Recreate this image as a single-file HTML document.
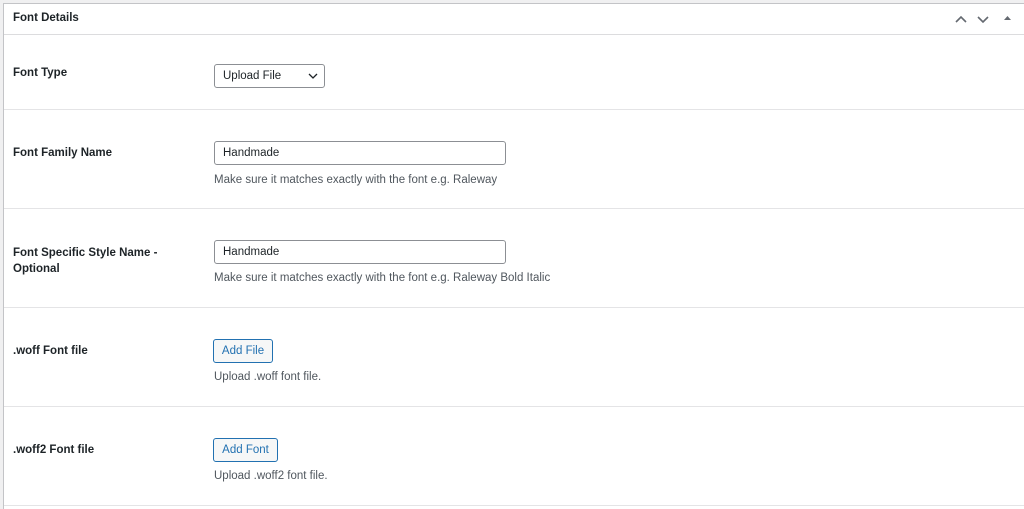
<!DOCTYPE html>
<html><head><style>
html,body{margin:0;width:1024px;height:509px;overflow:hidden;}
body{background:#f0f0f1;font-family:"Liberation Sans",sans-serif;color:#1d2327;position:relative;}
.box{position:absolute;left:3px;top:3px;width:1030px;height:520px;background:#fff;border:1px solid #c3c4c7;}
.hdr{position:absolute;left:0;top:0;right:0;height:30px;border-bottom:1px solid #dcdcde;}
.hdr b{position:absolute;left:9px;top:8px;font-size:11.5px;}
.a{position:absolute;font-size:11.5px;font-weight:bold;left:13px;}
.sep{position:absolute;left:4px;width:1020px;height:1px;background:#e4e4e6;}
.in{position:absolute;left:214px;border:1px solid #8c8f94;border-radius:3px;font-size:11.5px;line-height:22px;padding-left:8px;box-sizing:border-box;width:292px;height:24px;}
.h{position:absolute;left:214px;font-size:11.5px;color:#50575e;}
.btn{position:absolute;left:213px;height:24px;border:1px solid #2271b1;border-radius:3px;background:#f6f7f7;color:#2271b1;font-size:11.5px;line-height:22px;box-sizing:border-box;text-align:center;}
</style></head><body>
<div class="box"><div class="hdr"><b>Font Details</b></div></div>
<svg style="position:absolute;left:952px;top:12px" width="70" height="14">
<path d="M4 10 L9 5 L14 10" stroke="#646970" stroke-width="1.6" fill="none"/>
<path d="M26 5 L31 10 L36 5" stroke="#646970" stroke-width="1.6" fill="none"/>
<path d="M52 8 L55.5 4 L59 8Z" fill="#646970"/>
</svg>
<div class="a" style="top:67px">Font Type</div>
<div class="in" style="top:64px;width:111px">Upload File<svg style="position:absolute;right:6px;top:8px" width="10" height="7"><path d="M1 1 L5 5 L9 1" stroke="#1d2327" stroke-width="1.3" fill="none"/></svg></div>
<div class="sep" style="top:109px"></div>
<div class="a" style="top:147px">Font Family Name</div>
<div class="in" style="top:141px">Handmade</div>
<div class="h" style="top:174px">Make sure it matches exactly with the font e.g. Raleway</div>
<div class="sep" style="top:208px"></div>
<div class="a" style="top:245px;line-height:16px">Font Specific Style Name -<br>Optional</div>
<div class="in" style="top:240px">Handmade</div>
<div class="h" style="top:272px">Make sure it matches exactly with the font e.g. Raleway Bold Italic</div>
<div class="sep" style="top:307px"></div>
<div class="a" style="top:345px">.woff Font file</div>
<div class="btn" style="top:339px;width:60px">Add File</div>
<div class="h" style="top:371px">Upload .woff font file.</div>
<div class="sep" style="top:406px"></div>
<div class="a" style="top:444px">.woff2 Font file</div>
<div class="btn" style="top:438px;width:65px">Add Font</div>
<div class="h" style="top:470px">Upload .woff2 font file.</div>
<div class="sep" style="top:505px"></div>
</body></html>
